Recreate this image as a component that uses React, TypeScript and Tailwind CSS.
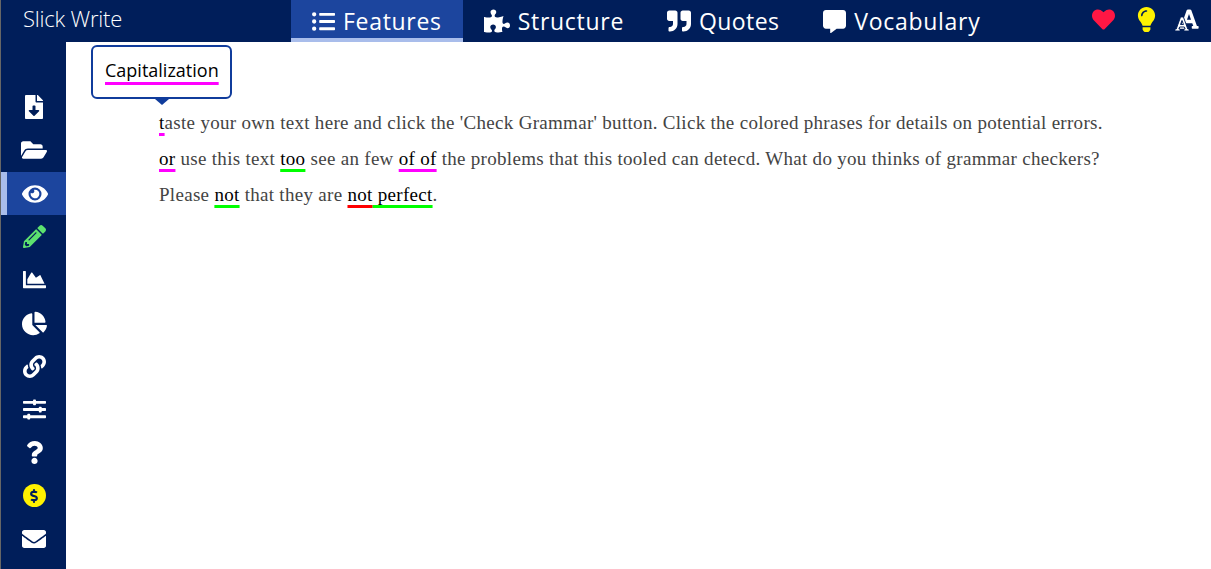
import React from "react";
import {
  FaChartArea,
  FaChartPie,
  FaCommentAlt,
  FaDollarSign,
  FaEnvelope,
  FaEye,
  FaFileDownload,
  FaFolderOpen,
  FaFont,
  FaHeart,
  FaLightbulb,
  FaLink,
  FaListUl,
  FaPencilAlt,
  FaPuzzlePiece,
  FaQuestion,
  FaQuoteRight,
  FaSlidersH,
} from "react-icons/fa";

const TABS = [
  { label: "Features", icon: FaListUl, size: 23, box: "w-[23px]", track: "tracking-[0.7px]", active: true },
  { label: "Structure", icon: FaPuzzlePiece, size: 26, box: "w-[26px]", track: "tracking-[0.7px]" },
  { label: "Quotes", icon: FaQuoteRight, size: 24, box: "w-[25px]", track: "tracking-[0.4px]" },
  { label: "Vocabulary", icon: FaCommentAlt, size: 23, box: "w-[25px] pl-[2px]", track: "tracking-[0.7px]" },
];

const SIDE_ITEMS = [
  { icon: FaFileDownload, size: 24 },
  { icon: FaFolderOpen, size: 26 },
  { icon: FaEye, size: 26, active: true },
  { icon: FaPencilAlt, size: 23, color: "text-[#5de26f]" },
  { icon: FaChartArea, size: 23 },
  { icon: FaChartPie, size: 25 },
  { icon: FaLink, size: 23 },
  { icon: FaSlidersH, size: 23 },
  { icon: FaQuestion, size: 23 },
  { icon: FaDollarSign, size: 14, coin: true },
  { icon: FaEnvelope, size: 24 },
];

const Mark = ({ color, children }: { color: string; children: React.ReactNode }) => (
  <span className={`text-black underline decoration-[3px] underline-offset-[4px] [text-decoration-skip-ink:none] ${color}`}>
    {children}
  </span>
);

const App = () => {
  return (
    <div className="h-[569px] w-[1211px] overflow-hidden flex flex-col bg-white border-l border-[#666] font-['Open_Sans',sans-serif]">
      <header className="h-[42px] flex bg-[#001e5a] text-white shrink-0">
        <div className="w-[290px] pl-[22px] pt-[2px] text-[22px] font-light tracking-[-0.2px]">Slick Write</div>
        <nav className="flex">
          {TABS.map((tab) => (
            <div
              key={tab.label}
              className={`flex items-center gap-[8px] px-[21px] text-[23px] ${tab.track} ${
                tab.active ? "bg-[#1c459e] border-b-4 border-[#a9bdeb] pt-[4px]" : ""
              }`}
            >
              <div className={`flex justify-center ${tab.box}`}>
                <tab.icon size={tab.size} />
              </div>
              <span>{tab.label}</span>
            </div>
          ))}
        </nav>
        <div className="ml-auto flex items-center pb-[3px]">
          <FaHeart size={23} className="text-[#ff1744] mr-[19px]" />
          <FaLightbulb size={25} className="text-[#fff200] mr-[15px]" />
          <div className="relative w-[26px] h-[24px] mr-[11px] mt-[1px]">
            <FaFont size={22} className="absolute right-0 top-0" />
            <FaFont size={16} className="absolute left-0 bottom-0 stroke-[#001e5a] stroke-[30px]" />
          </div>
        </div>
      </header>

      <div className="relative flex flex-1 min-h-0">
        <aside className="w-[65px] shrink-0 bg-[#001e5a] pt-[43.6px] text-white">
          {SIDE_ITEMS.map((item, i) => (
            <div
              key={i}
              className={`h-[43.2px] flex items-center justify-center ${
                item.active ? "bg-[#1c459e] border-l-[6px] border-[#a9bdeb] pr-[3px]" : "pl-[1px]"
              } ${item.color ?? ""}`}
            >
              {item.coin ? (
                <div className="w-[23px] h-[23px] rounded-full bg-[#fff200] text-[#001e5a] flex items-center justify-center">
                  <item.icon size={item.size} />
                </div>
              ) : (
                <item.icon size={item.size} />
              )}
            </div>
          ))}
        </aside>

        <main className="flex-1 pl-[93px] pt-[63px] pr-[40px] font-['Liberation_Serif',serif] text-[19px] tracking-[0.3px] leading-[36px] text-[#444]">
          <p>
            <Mark color="decoration-[#ff00ff]">t</Mark>aste your own text here and click the 'Check Grammar' button. Click the colored phrases for details on potential errors.
          </p>
          <p>
            <Mark color="decoration-[#ff00ff]">or</Mark> use this text <Mark color="decoration-[#00ff00]">too</Mark> see an few{" "}
            <Mark color="decoration-[#ff00ff]">of of</Mark> the problems that this tooled can detecd. What do you thinks of grammar checkers?
          </p>
          <p>
            Please <Mark color="decoration-[#00ff00]">not</Mark> that they are <Mark color="decoration-[#ff0000]">not</Mark>
            <Mark color="decoration-[#00ff00]"> perfect</Mark>.
          </p>
        </main>

        <div className="absolute left-[90px] top-[3px] h-[54px] w-[141px] bg-white border-2 border-[#103c9c] rounded-[6px] pl-[12px] pt-[11px] font-['Open_Sans',sans-serif] text-[18px] leading-[24px] text-black">
          <span className="underline decoration-[3px] decoration-[#ff00ff] underline-offset-[5px] [text-decoration-skip-ink:none]">Capitalization</span>
          <div className="absolute left-[62px] top-[52px] w-0 h-0 border-x-[7px] border-x-transparent border-t-[6px] border-t-[#103c9c]" />
        </div>
      </div>
    </div>
  );
};

export default App;
